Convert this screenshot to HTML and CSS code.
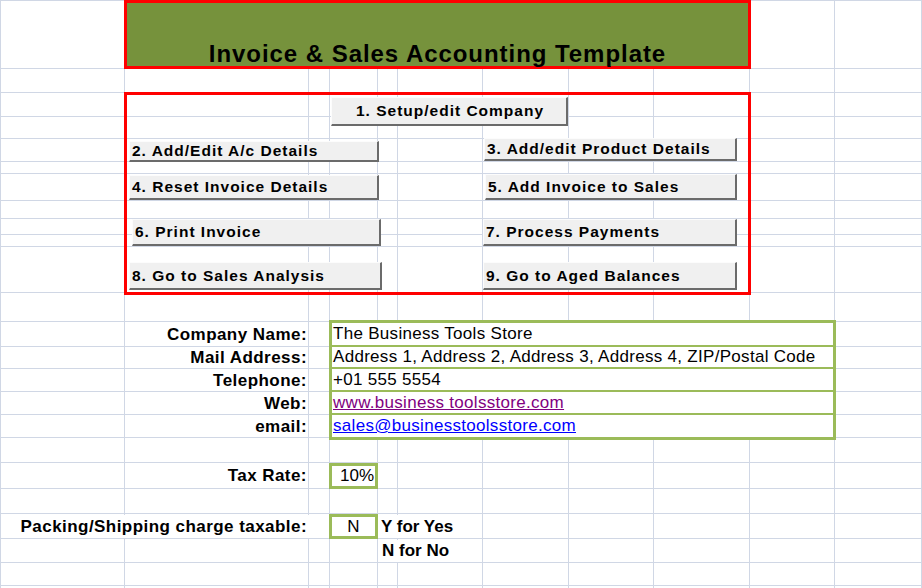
FILE: index.html
```html
<!DOCTYPE html>
<html>
    <head>
        <meta charset="UTF-8">
        <meta name="viewport" content="width=device-width, initial-scale=1.0">
        <title>Invoice &amp; Sales Accounting Template</title>
        <link rel="stylesheet" href="styles.css">
    </head>
    <body>
        <div class="page">
            <!-- sheet gridlines -->
            <div class="cols">
                <div></div><div></div><div></div><div></div><div></div><div></div>
                <div></div><div></div><div></div><div></div><div></div>
            </div>
            <div class="rows">
                <div></div><div></div><div></div><div></div><div></div><div></div>
                <div></div><div></div><div></div><div></div><div></div><div></div>
                <div></div><div></div><div></div><div></div><div></div><div></div>
                <div></div><div></div><div></div><div></div><div></div><div></div>
            </div>

            <div class="sheet">
                <div class="title">Invoice &amp; Sales Accounting Template</div>

                <div class="menu"></div>
                <div class="btn btn-1">1. Setup/edit Company</div>
                <div class="btn btn-2">2. Add/Edit A/c Details</div>
                <div class="btn btn-3">3. Add/edit Product Details</div>
                <div class="btn btn-4">4. Reset Invoice Details</div>
                <div class="btn btn-5">5. Add Invoice to Sales</div>
                <div class="btn btn-6">6. Print Invoice</div>
                <div class="btn btn-7">7. Process Payments</div>
                <div class="btn btn-8">8. Go to Sales Analysis</div>
                <div class="btn btn-9">9. Go to Aged Balances</div>

                <div class="label company">Company Name:</div>
                <div class="value first company">The Business Tools Store</div>
                <div class="label address">Mail Address:</div>
                <div class="value address">Address 1, Address 2, Address 3, Address 4, ZIP/Postal Code</div>
                <div class="label phone">Telephone:</div>
                <div class="value phone">+01 555 5554</div>
                <div class="label web">Web:</div>
                <div class="value web"><a class="visited" href="#">www.business toolsstore.com</a></div>
                <div class="label email">email:</div>
                <div class="value last email"><a href="#">sales@businesstoolsstore.com</a></div>

                <div class="label tax">Tax Rate:</div>
                <div class="small tax right">10%</div>

                <div class="label wide packing">Packing/Shipping charge taxable:</div>
                <div class="small packing">N</div>
                <div class="hint packing">Y for Yes</div>
                <div class="hint no">N for No</div>
            </div>
        </div>
    </body>
</html>
```

FILE: styles.css
```css
:root{
    --cols: 125px 184px 21px 48px 20px 85px 86px 85px 96px 85px 87px;
    --rows: 69px 24px 24px 22px 23px 12px 27px 18px 16px 12px 46px 29px 25px 22px 23px 23px 23px 25px 26px 25px 25px 24px 23px 24px;
    --grid: #d0d7e5;
    --green: #9bbb59;
}
*{
    margin: 0;
    padding: 0;
    box-sizing: border-box;
    font-family: "Liberation Sans", Arial, sans-serif;
}
body{
    background-color: white;
    color: black;
    height: 100vh;
    overflow: hidden;
}
.page{
    display: grid;
    width: 922px;
}
.cols, .rows, .sheet{
    grid-area: 1 / 1;
    display: grid;
    grid-template-columns: var(--cols);
    grid-template-rows: var(--rows);
}
.cols div{
    grid-row: 1 / -1;
    border-right: 1px solid var(--grid);
}
.cols div:first-child{
    border-left: 1px solid var(--grid);
}
.rows div{
    grid-column: 1 / -1;
    border-bottom: 1px solid var(--grid);
}
.rows div:first-child{
    border-top: 1px solid var(--grid);
}

/* header */
.title{
    grid-row: 1;
    grid-column: 2 / 10;
    background-color: #76923c;
    border: 3px solid #ff0000;
    margin: 0 -1px 0 -1px;
    display: flex;
    align-items: flex-end;
    justify-content: center;
    font-size: 24px;
    line-height: 24px;
    font-weight: bold;
    letter-spacing: 0.95px;
    white-space: nowrap;
}

/* button panel */
.menu{
    grid-row: 3 / 12;
    grid-column: 2 / 10;
    border: 3px solid #ff0000;
    margin: -1px -1px -2px -1px;
}
.btn{
    align-self: start;
    display: flex;
    align-items: center;
    padding-left: 2px;
    background-color: #f0f0f0;
    border-top: 1px solid #fcfcfc;
    border-left: 1px solid #fcfcfc;
    border-right: 2px solid #6b6b6b;
    border-bottom: 2px solid #6b6b6b;
    font-size: 15.5px;
    font-weight: bold;
    letter-spacing: 1px;
    white-space: nowrap;
}
.btn-1{
    grid-row: 3 / 5;
    grid-column: 4 / 8;
    margin: 4px 1px 0 1px;
    height: 29px;
    justify-content: center;
}
.btn-2{ grid-row: 5; grid-column: 2 / 5; margin: 2px -1px 0 4px; height: 21px; }
.btn-3{ grid-row: 5; grid-column: 7 / 10; margin: -1px 13px 0 1px; height: 23px; }
.btn-4{ grid-row: 7; grid-column: 2 / 5; margin: 1px -1px 0 4px; height: 25px; }
.btn-5{ grid-row: 7; grid-column: 7 / 10; margin: 0 13px 0 2px; height: 26px; }
.btn-6{ grid-row: 9 / 11; grid-column: 2 / 6; margin: 0 17px 0 7px; height: 27px; }
.btn-7{ grid-row: 9 / 11; grid-column: 7 / 10; margin: 0 13px 0 0; height: 27px; }
.btn-8{ grid-row: 11; grid-column: 2 / 6; margin: 15px 16px 0 4px; height: 28px; }
.btn-9{ grid-row: 11; grid-column: 7 / 10; margin: 15px 13px 0 0; height: 28px; }

/* company details */
.company{ grid-row: 13; }
.address{ grid-row: 14; }
.phone{ grid-row: 15; }
.web{ grid-row: 16; }
.email{ grid-row: 17; }
.tax{ grid-row: 19; }
.packing{ grid-row: 21; }
.no{ grid-row: 22; }

.label{
    grid-column: 2;
    display: flex;
    align-items: center;
    justify-content: flex-end;
    padding-right: 2px;
    font-size: 17px;
    font-weight: bold;
    letter-spacing: 0.45px;
    white-space: nowrap;
}
.label.wide{
    grid-column: 1 / 3;
    background-color: white;
    margin: 1px 0 1px 1px;
}
.value{
    grid-column: 4 / 11;
    display: flex;
    align-items: center;
    padding-left: 1px;
    margin: 0 -1px;
    background-color: white;
    border-left: 3px solid var(--green);
    border-right: 3px solid var(--green);
    border-bottom: 2px solid var(--green);
    font-size: 17px;
    letter-spacing: 0.3px;
    white-space: nowrap;
}
.value.first{
    border-top: 3px solid var(--green);
    margin-top: -2px;
}
.value.last{
    border-bottom-width: 3px;
    margin-bottom: -2px;
}
.value a{
    color: #0000ff;
    text-decoration: underline;
}
.value a.visited{
    color: #800080;
}
.small{
    grid-column: 4;
    display: flex;
    align-items: center;
    justify-content: center;
    margin: 0 0 0 -1px;
    background-color: white;
    border: 3px solid var(--green);
    font-size: 17px;
}
.small.right{
    justify-content: flex-end;
    padding-right: 1px;
}
.hint{
    grid-column: 5 / 7;
    display: flex;
    align-items: center;
    padding-left: 3px;
    margin: 1px 1px 1px 0;
    background-color: white;
    font-size: 17px;
    font-weight: bold;
    white-space: nowrap;
}
.hint.no{
    padding-left: 4px;
}
```
